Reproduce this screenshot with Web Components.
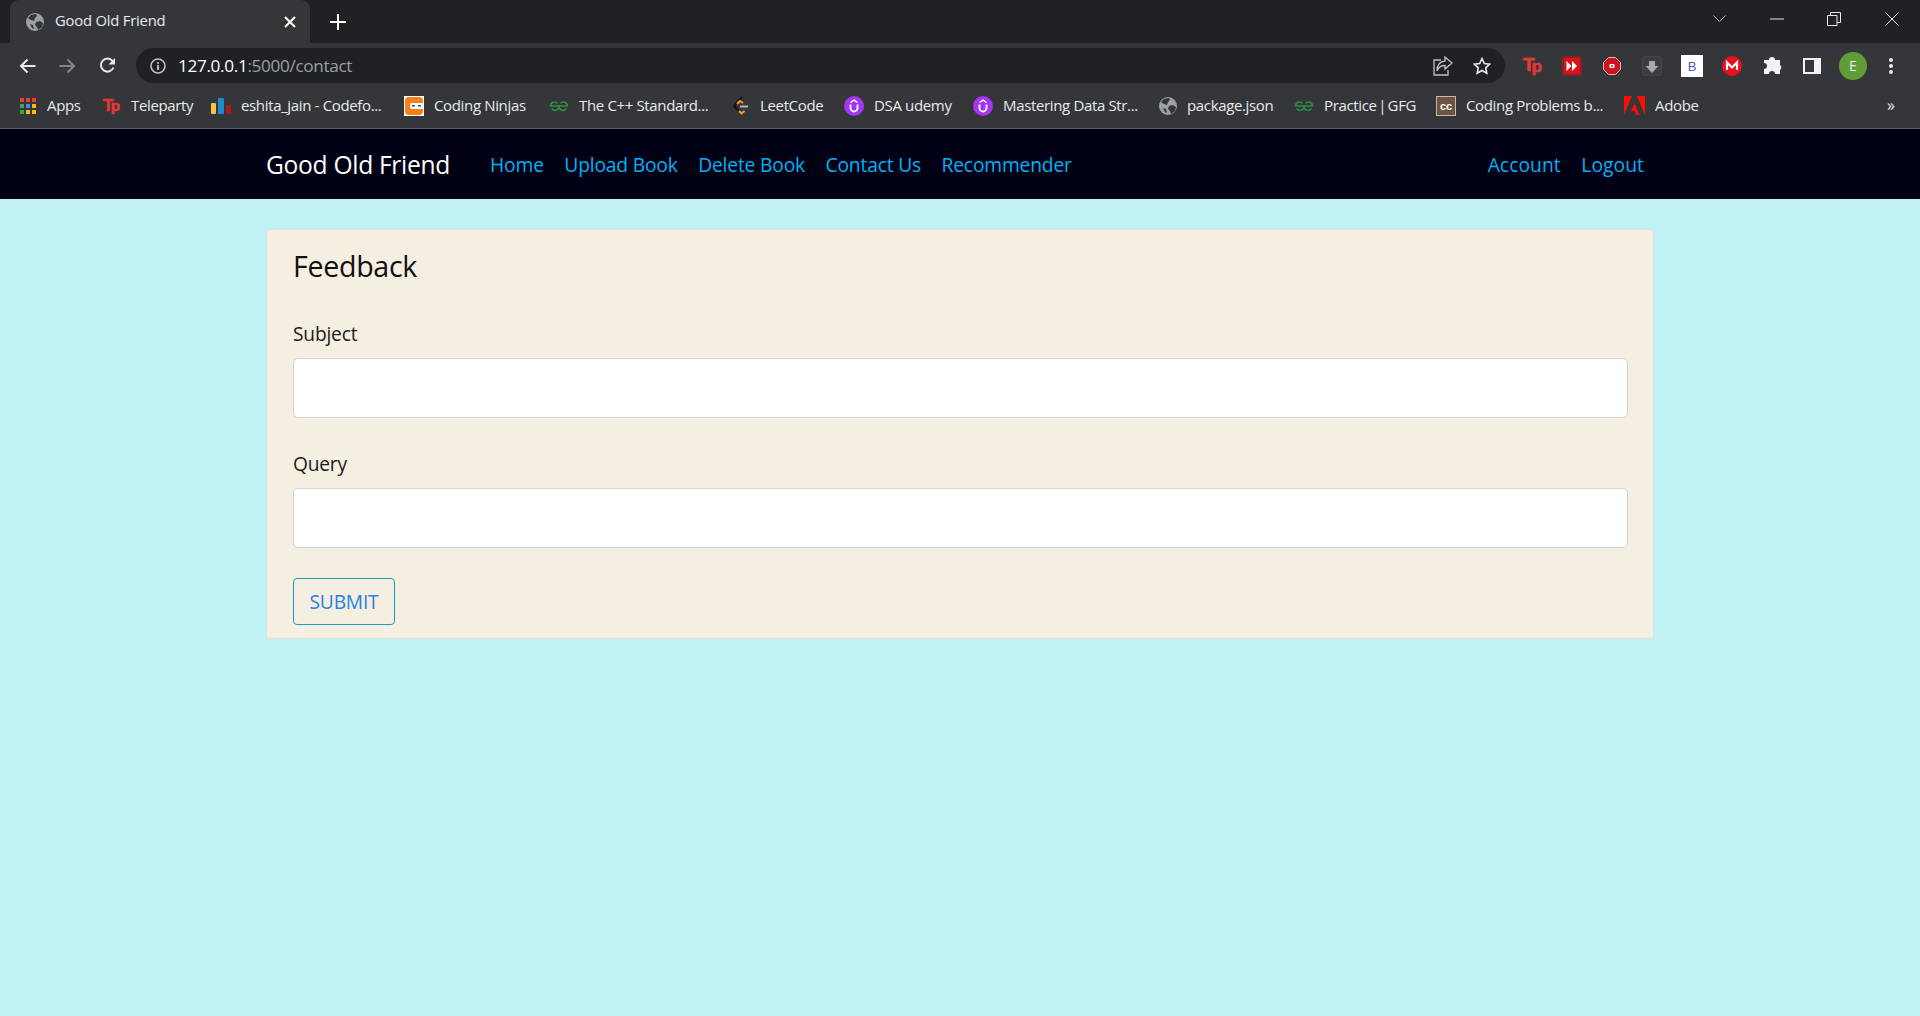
<!DOCTYPE html>
<html lang="en">
<head>
<meta charset="utf-8">
<title>Good Old Friend</title>
<style>
  html, body { margin: 0; height: 100%; }
  body { background: #c0f1f5; font-family: "Open Sans", "Noto Sans", sans-serif; overflow: hidden; }
</style>
</head>
<body>
<browser-tabs></browser-tabs>
<browser-toolbar></browser-toolbar>
<bookmark-bar></bookmark-bar>
<site-navbar brand="Good Old Friend">
  <nav-link>Home</nav-link>
  <nav-link>Upload Book</nav-link>
  <nav-link>Delete Book</nav-link>
  <nav-link>Contact Us</nav-link>
  <nav-link>Recommender</nav-link>
  <nav-link slot="right">Account</nav-link>
  <nav-link slot="right">Logout</nav-link>
</site-navbar>
<feedback-card heading="Feedback">
  <form-field label="Subject"></form-field>
  <form-field label="Query"></form-field>
</feedback-card>

<script>
const globe = `<svg width="18" height="18" viewBox="0 0 18 18"><circle cx="9" cy="9" r="9" fill="#9aa0a6"/><path d="M2 5l3-3 5-1 1 2-2 2-1 3-3-1zM10 9l4-1 3 2-1 4-4 3-1-3-2-2zM4 11l3 1 1 4-2-1z" fill="#35363a"/></svg>`;
const udemy = `<svg width="20" height="20" viewBox="0 0 20 20"><circle cx="10" cy="10" r="10" fill="#a435f0"/><path d="M6.500 8.500V12a3.500 3.500 0 0 0 7 0V8.500" fill="none" stroke="#fff" stroke-width="1.800"/><path d="M6.500 6.500L10 4.200l3.500 2.300" fill="none" stroke="#fff" stroke-width="1.400"/></svg>`;
const gfg = `<svg width="20" height="12" viewBox="0 0 20 12"><path d="M10 6H1.500a4 4 0 0 1 7-2.600M10 6h8.500a4 4 0 0 0-7-2.600M10 6a4 4 0 0 1-7.400 2.400M10 6a4 4 0 0 0 7.400 2.400" fill="none" stroke="#2f8d46" stroke-width="1.500"/></svg>`;
const tpLogo = (size) => `<svg width="${size}" height="${size}" viewBox="0 0 20 20" overflow="visible"><text x="0" y="15" font-family="Liberation Sans" font-weight="700" font-size="19" fill="#e53935" stroke="#e53935" stroke-width=".6">T</text><text x="8.500" y="16" font-family="Liberation Sans" font-weight="700" font-size="17" fill="#e53935" stroke="#e53935" stroke-width=".6">p</text></svg>`;

const bookmarks = [
  { label: 'Apps', width: 84, icon: `<svg width="18" height="18" viewBox="0 0 18 18">
      <g fill="#ea4335"><rect x="1" y="1" width="4" height="4"/><rect x="7" y="1" width="4" height="4"/><rect x="13" y="1" width="4" height="4"/></g>
      <g><rect x="1" y="7" width="4" height="4" fill="#34a853"/><rect x="7" y="7" width="4" height="4" fill="#4285f4"/><rect x="13" y="7" width="4" height="4" fill="#fbbc05"/></g>
      <g><rect x="1" y="13" width="4" height="4" fill="#34a853"/><rect x="7" y="13" width="4" height="4" fill="#fbbc05"/><rect x="13" y="13" width="4" height="4" fill="#fbbc05"/></g></svg>` },
  { label: 'Teleparty', width: 108, icon: tpLogo(18) },
  { label: 'eshita_jain - Codefo...', width: 193, icon: `<svg width="20" height="18" viewBox="0 0 20 18"><rect x="0" y="6" width="5" height="11" rx="1" fill="#f6c343"/><rect x="7" y="1" width="6" height="16" rx="1" fill="#1f8acb"/><rect x="15" y="8" width="5" height="9" rx="1" fill="#b3141d"/></svg>` },
  { label: 'Coding Ninjas', width: 145, icon: `<svg width="20" height="20" viewBox="0 0 20 20"><rect width="20" height="20" fill="#fff"/><rect x="1" y="1" width="18" height="18" rx="4" fill="#f58220"/><rect x="6" y="7" width="14" height="6" rx="2" fill="#fff"/><rect x="8" y="9" width="3" height="1.500" fill="#555"/><rect x="14" y="9" width="3" height="1.500" fill="#555"/></svg>` },
  { label: 'The C++ Standard...', width: 183, icon: gfg },
  { label: 'LeetCode', width: 112, icon: `<svg width="18" height="20" viewBox="0 0 18 20"><path d="M10 1L2 10l5 5" fill="none" stroke="#111" stroke-width="2"/><path d="M7 15l2.500 2.500 3-2.500M5 8l3-3 3 2" fill="none" stroke="#f89f1b" stroke-width="2"/><path d="M8 10.500h8" stroke="#b3b3b3" stroke-width="2"/></svg>` },
  { label: 'DSA udemy', width: 129, icon: udemy },
  { label: 'Mastering Data Str...', width: 186, icon: udemy },
  { label: 'package.json', width: 135, icon: globe },
  { label: 'Practice | GFG', width: 142, tight: true, icon: gfg },
  { label: 'Coding Problems b...', width: 188, icon: `<svg width="20" height="20" viewBox="0 0 20 20"><rect width="20" height="20" fill="#c9b9a6"/><rect x="1" y="1" width="18" height="18" fill="#6b5443"/><text x="10" y="14" text-anchor="middle" font-family="Liberation Sans" font-weight="700" font-size="11" fill="#fff">cc</text></svg>` },
  { label: 'Adobe', width: 100, icon: `<svg width="21" height="20" viewBox="0 0 21 20"><path d="M0 0h8L0 19zM13 0h8v19zM10.500 7l5 12h-3.300l-1.500-4H7z" fill="#fa0f00"/></svg>` },
];

const tabsTemplate = document.createElement('template');
tabsTemplate.innerHTML = `
  <style>
    :host { display: flex; height: 43px; background: #202124; color: #e8eaed; }
    .tab {
      width: 300px; margin-left: 10px; padding: 0 14px 0 16px; box-sizing: border-box;
      display: flex; align-items: center; background: #35363a; border-radius: 9px 9px 0 0;
    }
    .title { margin: -3px 0 0 11px; flex: 1; font-size: 14.800px; letter-spacing: -.2px; white-space: nowrap; }
    .plus { margin: 0 0 0 20px; align-self: center; display: flex; }
    .win { margin-left: auto; display: flex; align-items: center; }
    .win svg { display: block; }
  </style>
  <div class="tab">
    ${globe}
    <span class="title">Good Old Friend</span>
    <svg width="12" height="12" viewBox="0 0 12 12"><path d="M1 1l10 10M11 1L1 11" stroke="#fff" stroke-width="2"/></svg>
  </div>
  <div class="plus"><svg width="16" height="16" viewBox="0 0 16 16"><path d="M8 0v16M0 8h16" stroke="#fff" stroke-width="2"/></svg></div>
  <div class="win">
    <svg width="13" height="8" viewBox="0 0 13 8" style="margin-top:-5px"><path d="M.5 .5l6 6 6-6" fill="none" stroke="#bdc1c6"/></svg>
    <svg width="14" height="2" viewBox="0 0 14 2" style="margin:-6px 0 0 44px"><path d="M0 1h14" stroke="#e8eaed"/></svg>
    <svg width="14" height="14" viewBox="0 0 14 14" style="margin:-6px 0 0 43px"><path d="M.5 3.500h9.500v10H.5zM3.500 3.500V.5h10v10h-3.500" fill="none" stroke="#e8eaed"/></svg>
    <svg width="14" height="14" viewBox="0 0 14 14" style="margin:-6px 21px 0 44px"><path d="M.5 .5l13 13M13.500 .5l-13 13" fill="none" stroke="#e8eaed"/></svg>
  </div>
`;

class BrowserTabs extends HTMLElement {
  connectedCallback() {
    this.attachShadow({ mode: 'open' }).appendChild(tabsTemplate.content.cloneNode(true));
  }
}
customElements.define('browser-tabs', BrowserTabs);

const toolbarTemplate = document.createElement('template');
toolbarTemplate.innerHTML = `
  <style>
    :host { display: flex; align-items: center; height: 40px; background: #35363a; box-sizing: border-box; padding: 5px 0 0 19px; }
    svg { display: block; flex: none; }
    .nav { display: flex; gap: 23px; align-items: center; }
    .omni {
      margin-left: 20px; width: 1369px; height: 35px; box-sizing: border-box; flex: none;
      background: #202124; border-radius: 18px; display: flex; align-items: center; padding: 0 14px 0 14px;
    }
    .url { margin-left: 12px; font-size: 17.200px; letter-spacing: -.35px; color: #9aa0a6; flex: 1; white-space: nowrap; }
    .url b { font-weight: 400; color: #fff; }
    .omni-tools { display: flex; gap: 20px; align-items: center; }
    .ext { margin-left: 18px; display: flex; align-items: center; }
  </style>
  <div class="nav">
    <svg width="17" height="16" viewBox="0 0 17 16"><path d="M16.500 8H2M8.500 1.500L2 8l6.500 6.500" fill="none" stroke="#e8eaed" stroke-width="2"/></svg>
    <svg width="17" height="16" viewBox="0 0 17 16"><path d="M.5 8H15M8.500 1.500L15 8l-6.500 6.500" fill="none" stroke="#80868b" stroke-width="2"/></svg>
    <svg width="17" height="17" viewBox="0 0 17 17"><path d="M14.500 10.500a6.500 6.500 0 1 1-1-6.500" fill="none" stroke="#e8eaed" stroke-width="2"/><path d="M16 1v6.500h-6.500z" fill="#e8eaed"/></svg>
  </div>
  <div class="omni">
    <svg width="16" height="16" viewBox="0 0 16 16"><circle cx="8" cy="8" r="7" fill="none" stroke="#bdc1c6" stroke-width="1.600"/><path d="M8 7v5M8 4v1.800" stroke="#bdc1c6" stroke-width="1.800"/></svg>
    <span class="url"><b>127.0.0.1</b>:5000/contact</span>
    <div class="omni-tools">
      <svg width="20" height="20" viewBox="0 0 20 20"><path d="M8 4H1v15h14v-5" fill="none" stroke="#bdc1c6" stroke-width="1.300"/><path d="M12 1l7 6-7 6V9.500C8 9.500 5.500 11 4 15c0-6 3-9.500 8-10z" fill="none" stroke="#bdc1c6" stroke-width="1.300"/></svg>
      <svg width="18" height="18" viewBox="0 0 18 18"><path d="M9 1.500l2.300 5 5.400.6-4 3.700 1.100 5.400L9 13.500l-4.800 2.700 1.100-5.400-4-3.700 5.400-.6z" fill="none" stroke="#e8eaed" stroke-width="1.600"/></svg>
    </div>
  </div>
  <div class="ext">
    <span style="margin-right:19px;display:flex">${tpLogo(20)}</span>
    <svg style="margin-right:21px" width="20" height="20" viewBox="0 0 20 20"><rect x="1" y="1" width="18" height="18" rx="3" fill="#d9141c" stroke="#8e2024" stroke-width="2"/><path d="M4.500 5l5 5-5 5zM10 5l5 5-5 5z" fill="#fff"/></svg>
    <svg style="margin-right:21px" width="18" height="18" viewBox="0 0 18 18"><path d="M5.500 .5h7l5 5v7l-5 5h-7l-5-5v-7z" fill="#cf1322" stroke="#e0b4b4"/><rect x="6.500" y="7" width="5" height="4" rx="1" fill="#fff"/><circle cx="9" cy="9" r="1" fill="#cf1322"/></svg>
    <svg style="margin-right:19px" width="20" height="20" viewBox="0 0 20 20"><rect x=".5" y=".5" width="19" height="19" rx="2" fill="#3c3d40" stroke="#45464a"/><path d="M7 5h6v5h3.500L10 17 3.500 10H7z" fill="#a8a8a8"/></svg>
    <svg style="margin-right:19px" width="22" height="22" viewBox="0 0 22 22"><rect width="22" height="22" fill="#fff"/><text x="11" y="16" text-anchor="middle" font-family="Liberation Sans" font-size="13" fill="#4a55c8">B</text></svg>
    <svg style="margin-right:21px" width="20" height="20" viewBox="0 0 20 20"><circle cx="10" cy="10" r="10" fill="#e8101a"/><path d="M5 14V6.500l5 5 5-5V14" fill="none" stroke="#fff" stroke-width="2.200"/></svg>
    <svg style="margin-right:21px" width="19" height="19" viewBox="0 0 19 19"><path d="M6 4a3 3 0 0 1 6 0h5v5a3 3 0 0 1 0 5v4h-5a3 3 0 0 0-6 0H1v-5a3 3 0 0 0 0-6V4z" fill="#f1f3f4"/></svg>
    <svg style="margin-right:18px" width="18" height="16" viewBox="0 0 18 16"><rect x="1" y="1" width="16" height="14" fill="none" stroke="#f1f3f4" stroke-width="2"/><rect x="11" y="1" width="6" height="14" fill="#f1f3f4"/></svg>
    <svg style="margin-right:22px" width="28" height="28" viewBox="0 0 28 28"><circle cx="14" cy="14" r="14" fill="#5f9e36"/><text x="14" y="19" text-anchor="middle" font-family="Open Sans" font-size="14" fill="#e8eaed">E</text></svg>
    <svg width="4" height="16" viewBox="0 0 4 16"><circle cx="2" cy="2" r="2" fill="#e8eaed"/><circle cx="2" cy="8" r="2" fill="#e8eaed"/><circle cx="2" cy="14" r="2" fill="#e8eaed"/></svg>
  </div>
`;

class BrowserToolbar extends HTMLElement {
  connectedCallback() {
    this.attachShadow({ mode: 'open' }).appendChild(toolbarTemplate.content.cloneNode(true));
  }
}
customElements.define('browser-toolbar', BrowserToolbar);

class BookmarkBar extends HTMLElement {
  connectedCallback() {
    const items = bookmarks
      .map((b) => {
        return `<div class="item" style="width:${b.width}px"><span class="ico">${b.icon}</span><span class="label${b.tight ? ' tight' : ''}">${b.label}</span></div>`;
      })
      .join('');
    this.attachShadow({ mode: 'open' }).innerHTML = `
      <style>
        :host {
          display: flex; align-items: center; height: 46px; padding: 0 0 0 19px; box-sizing: border-box;
          background: #35363a; border-bottom: 1px solid #5a5b5e; color: #e8eaed;
        }
        .item { display: flex; align-items: center; gap: 10px; flex: none; }
        .ico { display: flex; flex: none; }
        .label { font-size: 15px; letter-spacing: -.35px; white-space: nowrap; margin-top: -2px; }
        .tight { word-spacing: -2px; }
        .more { margin-left: auto; margin-right: 25px; font-size: 16px; margin-top: -2px; }
      </style>
      ${items}
      <span class="more">»</span>
    `;
  }
}
customElements.define('bookmark-bar', BookmarkBar);

class NavLink extends HTMLElement {
  connectedCallback() {
    this.attachShadow({ mode: 'open' }).innerHTML = `
      <style>
        :host { display: block; color: #00b2f5; font-size: 19.300px; letter-spacing: -.2px; white-space: nowrap; }
        :host([slot="right"]) { letter-spacing: .05px; }
      </style>
      <slot></slot>
    `;
  }
}
customElements.define('nav-link', NavLink);

class SiteNavbar extends HTMLElement {
  connectedCallback() {
    this.attachShadow({ mode: 'open' }).innerHTML = `
      <style>
        :host {
          display: flex; align-items: center; height: 70px; box-sizing: border-box;
          padding: 0 276px 0 266px; background: #000014;
        }
        .brand { color: #fff; font-size: 24.600px; letter-spacing: -.3px; margin-right: 40px; white-space: nowrap; }
        .links { display: flex; gap: 20.500px; }
        .right { margin-left: auto; }
      </style>
      <div class="brand">${this.getAttribute('brand')}</div>
      <div class="links"><slot></slot></div>
      <div class="links right"><slot name="right"></slot></div>
    `;
  }
}
customElements.define('site-navbar', SiteNavbar);

class FormField extends HTMLElement {
  connectedCallback() {
    this.attachShadow({ mode: 'open' }).innerHTML = `
      <style>
        :host { display: block; margin-bottom: 32px; }
        label { display: block; height: 30px; line-height: 28px; margin-bottom: 8px; font-size: 19.200px; letter-spacing: -.2px; color: #1a1a1a; }
        input {
          display: block; width: 100%; height: 60px; box-sizing: border-box;
          background: #fff; border: 1px solid #ced4da; border-radius: 5px; outline: none;
        }
      </style>
      <label>${this.getAttribute('label')}</label>
      <input type="text">
    `;
  }
}
customElements.define('form-field', FormField);

class FeedbackCard extends HTMLElement {
  connectedCallback() {
    this.attachShadow({ mode: 'open' }).innerHTML = `
      <style>
        :host {
          display: block; width: 1388px; height: 410px; margin: 30px 0 0 266px; box-sizing: border-box;
          padding: 9px 25px 0 26px; background: #f5efe2;
          border: 1px solid #dfe1da; border-radius: 4px;
        }
        h2 { margin: 0 0 27px; height: 54px; line-height: 54px; font-size: 28.600px; font-weight: 400; letter-spacing: -.3px; color: #111; }
        button {
          display: block; margin-top: -2px; width: 102px; height: 47px; padding: 0; background: transparent;
          border: 1px solid #17a2b8; border-radius: 4px; color: #2a80e4;
          font: 400 19.200px "Open Sans", "Noto Sans", sans-serif; letter-spacing: -.2px;
        }
      </style>
      <h2>${this.getAttribute('heading')}</h2>
      <slot></slot>
      <button type="button">SUBMIT</button>
    `;
  }
}
customElements.define('feedback-card', FeedbackCard);
</script>
</body>
</html>
